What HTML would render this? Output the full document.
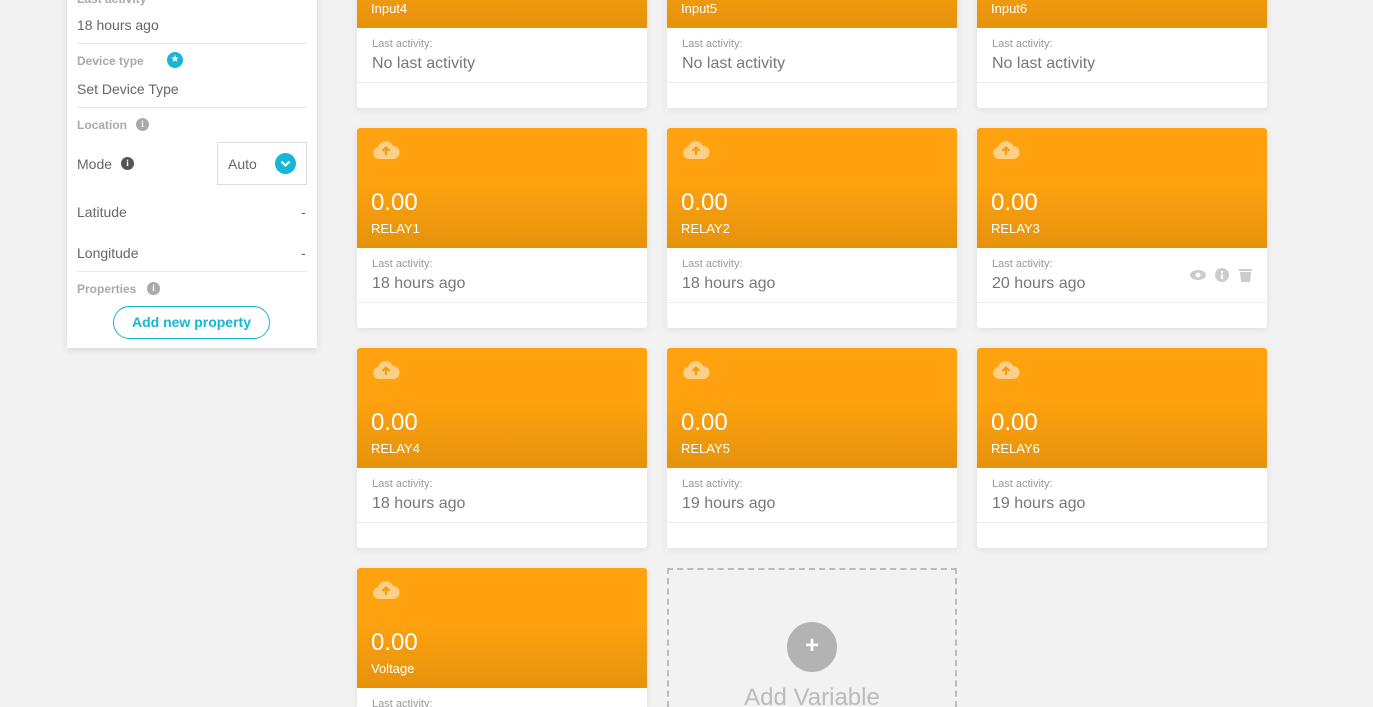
<!DOCTYPE html>
<html style="width:1373px;height:707px;overflow:hidden"><head><meta charset="utf-8"><style>
*{box-sizing:border-box;margin:0;padding:0}
body{width:1373px;height:707px;overflow:hidden;background:#f2f2f2;font-family:"Liberation Sans",sans-serif;position:relative}
.side{position:absolute;left:67px;top:-10px;width:250px;height:358px;background:#fff;box-shadow:0 2px 6px rgba(0,0,0,.12)}
.t{position:absolute;color:#666;font-size:14px}
.lbl{position:absolute;color:#aaa;font-size:12px;font-weight:bold}
.hr{position:absolute;left:10px;width:230px;height:1px;background:#e6e6e6}
.ic{position:absolute;width:13px;height:13px;border-radius:50%;background:#aaa;color:#fff;font-size:9px;font-weight:bold;text-align:center;line-height:13px;font-family:"Liberation Serif",serif}
.card{position:absolute;width:290px;height:200px;background:#fff;border-radius:3px;box-shadow:0 2px 8px rgba(0,0,0,.08);overflow:hidden}
.hd{height:120px;background:linear-gradient(#fea20f 0,#fea20f 45%,#e5920c 100%);position:relative}
.val{position:absolute;left:14px;top:61px;color:#fff;font-size:24px}
.nm{position:absolute;left:14px;top:93px;color:#fff;font-size:13px}
.la{position:absolute;left:15px;top:130px;color:#999;font-size:11px}
.tm{position:absolute;left:15px;top:147px;color:#777;font-size:16px}
.ln{position:absolute;left:0;right:0;top:174px;height:1px;background:#ececec}
.cl{position:absolute;left:15px;top:12px}
</style></head><body>
<div class="side">
<div class="lbl" style="left:10px;top:2px">Last activity</div>
<div class="t" style="left:10px;top:27px">18 hours ago</div>
<div class="hr" style="top:53px"></div>
<div class="lbl" style="left:10px;top:64px">Device type</div>
<div style="position:absolute;left:100px;top:62px;width:16px;height:16px;border-radius:50%;background:#17b6d6;color:#fff;font-size:10px;text-align:center;line-height:16px">★</div>
<div class="t" style="left:10px;top:91px">Set Device Type</div>
<div class="hr" style="top:117px"></div>
<div class="lbl" style="left:10px;top:128px">Location</div>
<div class="ic" style="left:69px;top:128px">i</div>
<div class="t" style="left:10px;top:166px">Mode</div>
<div class="ic" style="left:54px;top:167px;background:#555">i</div>
<div style="position:absolute;left:150px;top:152px;width:90px;height:43px;border:1px solid #ddd"></div>
<div class="t" style="left:161px;top:166px">Auto</div>
<div style="position:absolute;left:208px;top:163px;width:21px;height:21px;border-radius:50%;background:#17b6d6"><svg width="21" height="21"><path d="M6.5 8.5l4 4 4-4" stroke="#fff" stroke-width="2.2" fill="none"/></svg></div>
<div class="t" style="left:10px;top:214px">Latitude</div><div class="t" style="left:234px;top:214px">-</div>
<div class="t" style="left:10px;top:255px">Longitude</div><div class="t" style="left:234px;top:255px">-</div>
<div class="hr" style="top:281px"></div>
<div class="lbl" style="left:10px;top:292px">Properties</div>
<div class="ic" style="left:80px;top:292px">i</div>
<div style="position:absolute;left:46px;top:316px;width:157px;height:33px;border:1px solid #17b6d6;border-radius:17px;color:#17b6d6;font-weight:bold;font-size:14px;text-align:center;line-height:31px">Add new property</div>
</div>
<div id="c"></div>
<script>
const cl='<svg class="cl" width="28" height="20" viewBox="0 0 28 20"><path d="M7 19a6 6 0 0 1-1-11.9A8 8 0 0 1 21 6a6.5 6.5 0 0 1 0 13z" fill="#fdd08a"/><path d="M14 15V8M10.5 11l3.5-3.5 3.5 3.5" stroke="#f29a0e" stroke-width="2" fill="none"/></svg>';
const data=[
[-92,'Input4','No last activity'],[-92,'Input5','No last activity'],[-92,'Input6','No last activity'],
[128,'RELAY1','18 hours ago'],[128,'RELAY2','18 hours ago'],[128,'RELAY3','20 hours ago'],
[348,'RELAY4','18 hours ago'],[348,'RELAY5','19 hours ago'],[348,'RELAY6','19 hours ago'],
[568,'Voltage','']];
let h='';
data.forEach((d,i)=>{const x=357+(i%3)*310;
const ht=i==9?'height:139px;border-radius:3px 3px 0 0;':'';
h+=`<div class="card" style="left:${x}px;top:${d[0]}px;${ht}"><div class="hd">${cl}<div class="val">0.00</div><div class="nm">${d[1]}</div></div><div class="la">Last activity:</div><div class="tm">${d[2]}</div>${i==9?'':'<div class="ln"></div>'}`;
if(i==5)h+=`<svg style="position:absolute;left:212px;top:139px" width="70" height="16"><ellipse cx="9" cy="8" rx="8" ry="5" fill="#ccc"/><circle cx="9" cy="8" r="2.5" fill="#fff"/><circle cx="33" cy="8" r="7" fill="#ccc"/><rect x="32" y="7" width="2" height="5" fill="#fff"/><rect x="32" y="4" width="2" height="2" fill="#fff"/><rect x="50" y="2" width="13" height="2" fill="#ccc"/><path d="M51 5h11l-1 10h-9z" fill="#ccc"/></svg>`;
h+='</div>';});
h+=`<div style="position:absolute;left:667px;top:568px;width:290px;height:139px;border:2px dashed #bbb;border-bottom:none;overflow:hidden"><div style="position:absolute;left:118px;top:52px;width:50px;height:50px;border-radius:50%;background:#b3b3b3;color:#fff;font-size:24px;font-weight:bold;text-align:center;line-height:48px">+</div><div style="position:absolute;left:0;right:0;top:114px;text-align:center;color:#bbb;font-size:24px;line-height:28px">Add Variable</div></div>`;
document.getElementById('c').innerHTML=h;
</script>
</body></html>
